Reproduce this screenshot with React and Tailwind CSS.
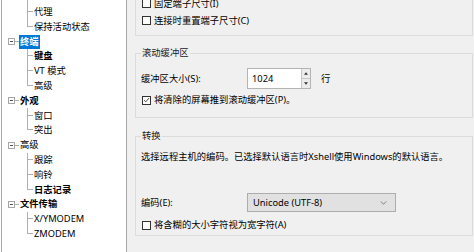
import React from 'react';

const tree = [
  { label: '代理', level: 1 },
  { label: '保持活动状态', level: 1, last: true },
  { label: '终端', level: 0, bold: true, selected: true },
  { label: '键盘', level: 1, bold: true },
  { label: 'VT 模式', level: 1 },
  { label: '高级', level: 1, last: true },
  { label: '外观', level: 0, bold: true },
  { label: '窗口', level: 1 },
  { label: '突出', level: 1, last: true },
  { label: '高级', level: 0 },
  { label: '跟踪', level: 1 },
  { label: '响铃', level: 1 },
  { label: '日志记录', level: 1, bold: true, last: true },
  { label: '文件传输', level: 0, bold: true },
  { label: 'X/YMODEM', level: 1 },
  { label: 'ZMODEM', level: 1, last: true },
];

const TreeRow = ({ item }) => {
  if (item.level === 0) {
    return (
      <div className="flex items-center h-[14.8px]">
        <div className="w-[6px]" />
        <div className="w-[7px] h-[7px] border border-[#a6a6a6] flex items-center justify-center">
          <div className="w-[3px] h-px bg-[#555]" />
        </div>
        <div className="w-[4px] h-px bg-[#b0b0b0]" />
        <span
          className={`px-[1px] leading-[14px] ${item.selected ? 'bg-[#0078d7] text-white' : 'text-black'} ${item.bold ? 'font-bold' : ''}`}
        >
          {item.label}
        </span>
      </div>
    );
  }
  return (
    <div className="flex items-stretch h-[14.8px]">
      <div className="w-[25px]" />
      <div className="w-[6px] flex flex-col">
        <div className="h-1/2 border-l border-b border-[#b0b0b0]" />
        <div className={`h-1/2 ${item.last ? '' : 'border-l border-[#b0b0b0]'}`} />
      </div>
      <span className={`pl-[1px] flex items-center text-black ${item.bold ? 'font-bold' : ''}`}>{item.label}</span>
    </div>
  );
};

const Checkbox = ({ checked, label }) => (
  <div className="flex items-center gap-[3px]">
    <div className="ml-[1px] w-[9px] h-[9px] border border-[#333] bg-white flex items-center justify-center">
      {checked && (
        <svg viewBox="0 0 10 10" className="w-[8px] h-[8px]">
          <path d="M1.5 5.2 L4 7.6 L8.6 2.2" fill="none" stroke="#222" strokeWidth="1.1" />
        </svg>
      )}
    </div>
    <span>{label}</span>
  </div>
);

const GroupLabel = ({ children }) => (
  <div className="-mt-[7px] ml-[0px] self-start px-[1px] bg-[#f0f0f0] leading-[12px] text-[#222]">{children}</div>
);

export default function App() {
  return (
    <div
      className="flex h-[252px] w-[474px] overflow-hidden bg-white text-[9.3px] text-black"
      style={{ fontFamily: '"Noto Sans", "Noto Sans CJK SC", sans-serif' }}
    >
      {/* tree panel */}
      <div className="ml-[1px] w-[126px] shrink-0 bg-white border-l border-r border-[#a9a9a9]">
        <div className="h-[4.6px] flex">
          <div className="w-[25px]" />
          <div className="border-l border-[#b0b0b0]" />
        </div>
        {tree.map((item, i) => (
          <TreeRow key={i} item={item} />
        ))}
      </div>

      {/* settings panel */}
      <div className="flex-1 bg-[#f0f0f0] pl-[8px] pr-[1px] flex flex-col">
        <div className="-mt-[6px] border border-[#dcdcdc] pl-[5px] pb-[6px] flex flex-col">
          <div className="h-[17px] flex items-center">
            <Checkbox label="固定端子尺寸(I)" />
          </div>
          <div className="h-[17px] flex items-center">
            <Checkbox label="连接时重置端子尺寸(C)" />
          </div>
        </div>

        <div className="mt-[17px] border border-[#dcdcdc] pl-[5px] pb-[10px] flex flex-col">
          <GroupLabel>滚动缓冲区</GroupLabel>
          <div className="mt-[9px] flex items-center">
            <div className="w-[106px]">缓冲区大小(S):</div>
            <div className="flex h-[21px] border border-[#b4b4b4] bg-white">
              <div className="w-[53px] pl-[4px] flex items-center">1024</div>
              <div className="w-[9px] flex flex-col border-l border-[#c8c8c8] bg-[#ececec]">
                <div className="flex-1 flex items-center justify-center border-b border-[#c8c8c8]">
                  <svg viewBox="0 0 6 4" className="w-[4px] h-[3px]">
                    <path d="M0 4 L3 0 L6 4 Z" fill="#333" />
                  </svg>
                </div>
                <div className="flex-1 flex items-center justify-center">
                  <svg viewBox="0 0 6 4" className="w-[4px] h-[3px]">
                    <path d="M0 0 L3 4 L6 0 Z" fill="#333" />
                  </svg>
                </div>
              </div>
            </div>
            <span className="ml-[10px]">行</span>
          </div>
          <div className="mt-[4px] h-[14px] flex items-center">
            <Checkbox checked label="将清除的屏幕推到滚动缓冲区(P)。" />
          </div>
        </div>

        <div className="mt-[18px] border border-[#dcdcdc] pl-[5px] pb-[3px] flex flex-col">
          <GroupLabel>转换</GroupLabel>
          <div className="mt-[9px] leading-[12px]">选择远程主机的编码。已选择默认语言时Xshell使用Windows的默认语言。</div>
          <div className="mt-[30px] flex items-center">
            <div className="w-[106px]">编码(E):</div>
            <div className="w-[149px] h-[19px] border border-[#adadad] bg-[#e1e1e1] flex items-center justify-between pl-[5px] pr-[8px]">
              <span>Unicode (UTF-8)</span>
              <svg viewBox="0 0 8 5" className="w-[7px] h-[4px]">
                <path d="M0.5 0.5 L4 4 L7.5 0.5" fill="none" stroke="#666" strokeWidth="1" />
              </svg>
            </div>
          </div>
          <div className="mt-[6px] h-[14px] flex items-center">
            <Checkbox label="将含糊的大小字符视为宽字符(A)" />
          </div>
        </div>
      </div>
    </div>
  );
}
